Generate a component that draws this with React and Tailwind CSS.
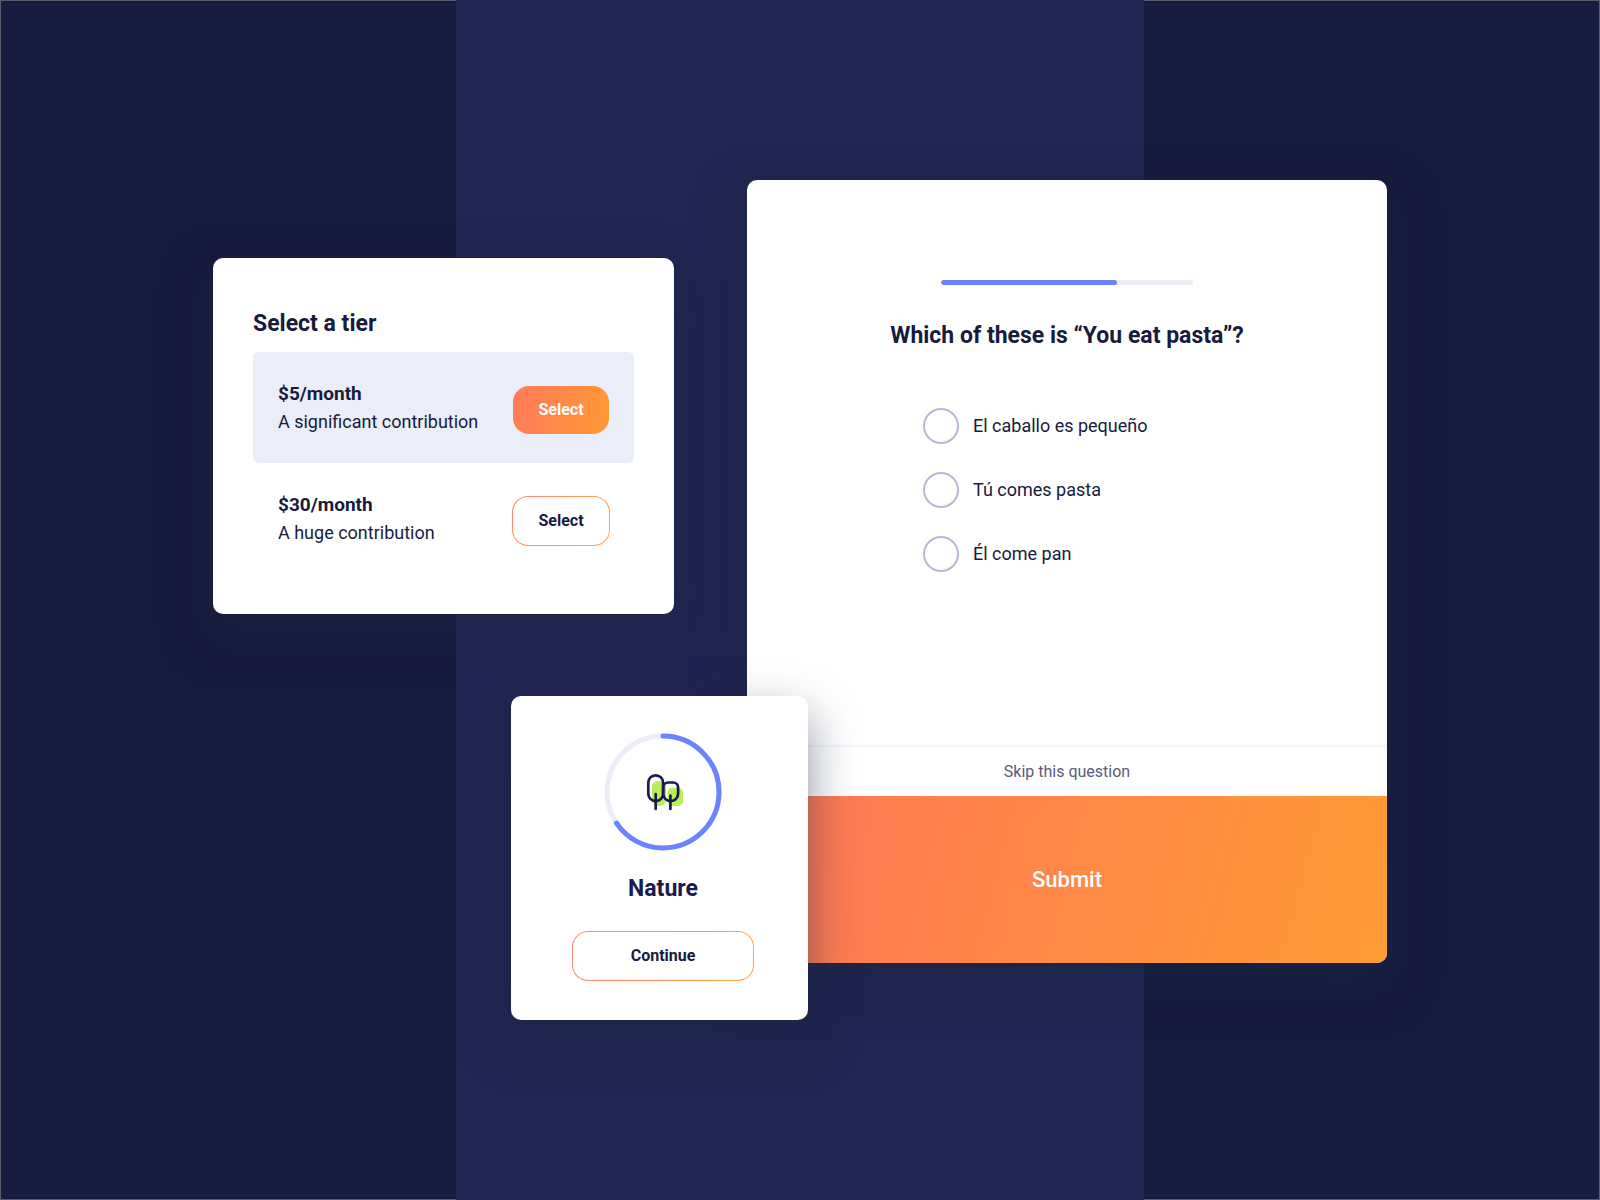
import React, { useState } from 'react';

const tiers = [
  { price: '$5/month', description: 'A significant contribution', featured: true },
  { price: '$30/month', description: 'A huge contribution', featured: false },
];

const answers = ['El caballo es pequeño', 'Tú comes pasta', 'Él come pan'];

const Backdrop = () => (
  <div className="absolute inset-0 grid grid-cols-[57fr_86fr_57fr]">
    <div className="border-y border-l border-[#5b5d6f] bg-[#171b3d]" />
    <div className="bg-[#212551]" />
    <div className="border-y border-r border-[#5b5d6f] bg-[#171b3d]" />
  </div>
);

const OutlineButton = ({ className, children }) => (
  <button
    type="button"
    className={`h-[50px] rounded-2xl border border-transparent text-base font-bold text-[#181b3d] [background:linear-gradient(#fff,#fff)_padding-box,linear-gradient(105deg,#ff8a70,#ffa64d)_border-box] ${className}`}
  >
    {children}
  </button>
);

const TierCard = () => (
  <section className="rounded-[10px] bg-white px-10 pt-[52px] pb-10 shadow-[0_20px_48px_rgba(26,39,68,0.5)]">
    <h2 className="mb-[14px] text-[23px] leading-7 font-bold">Select a tier</h2>
    {tiers.map((tier) => (
      <div
        key={tier.price}
        className={`flex items-center justify-between rounded-md px-[25px] pt-7 pb-[27px] ${tier.featured ? 'bg-[#ebedf8]' : ''}`}
      >
        <div>
          <h3 className="text-[19px] leading-7 font-bold">{tier.price}</h3>
          <p className="text-lg leading-7">{tier.description}</p>
        </div>
        {tier.featured ? (
          <button type="button" className="mt-1 h-12 w-24 rounded-2xl bg-[linear-gradient(105deg,#ff7a5c,#ff9a34)] text-base font-bold text-white">
            Select
          </button>
        ) : (
          <OutlineButton className="mt-1 -mr-px w-[98px]">Select</OutlineButton>
        )}
      </div>
    ))}
  </section>
);

const NatureProgress = () => (
  <svg className="h-[118px] w-[118px]" viewBox="0 0 118 118" fill="none" strokeLinecap="round">
    <circle cx="59" cy="59" r="56" stroke="#ebedf8" strokeWidth="5" />
    <circle cx="59" cy="59" r="56" stroke="#6b83ff" strokeWidth="5" pathLength="1000" strokeDasharray="656 1000" transform="rotate(-90 59 59)" />
    <rect x="48" y="48" width="14" height="25" rx="6" fill="#b8ee57" />
    <rect x="63.7" y="54.7" width="15.3" height="18.3" rx="5" fill="#b8ee57" />
    <g stroke="#1b1a50" strokeWidth="2.7">
      <rect x="44.3" y="42.3" width="14.8" height="25.7" rx="7.2" />
      <path d="M59.2 54.5a5 5 0 0 1 5-5h4.9a5 5 0 0 1 5 5v6.3a7.2 7.2 0 0 1-7.2 7.2h-.5a7.2 7.2 0 0 1-7.2-7.2z" />
      <path d="M51.7 61v15M66.4 62.5V76" />
    </g>
  </svg>
);

const NatureCard = () => (
  <section className="relative z-10 mt-[82px] -mr-[134px] flex w-[297px] flex-col items-center self-end rounded-[10px] bg-white pt-[37px] pr-[54px] pb-[39px] pl-[61px] shadow-[0_20px_48px_rgba(26,39,68,0.5)]">
    <NatureProgress />
    <h2 className="mt-6 mb-7 text-[23px] leading-7 font-bold text-[#1b1a50]">Nature</h2>
    <OutlineButton className="w-full">Continue</OutlineButton>
  </section>
);

const QuizCard = () => {
  const [answer, setAnswer] = useState('');

  return (
    <form className="flex w-[640px] flex-col overflow-hidden rounded-[10px] bg-white pt-[100px] shadow-[0_20px_48px_rgba(26,39,68,0.5)]">
      <div className="mx-auto h-[5px] w-[252px] overflow-hidden rounded-full bg-[#ebedf8]">
        <div className="h-full w-[70%] rounded-full bg-[#6b83ff]" />
      </div>
      <h2 className="mt-[37px] text-center text-[23px] leading-7 font-bold">Which of these is “You eat pasta”?</h2>
      <div role="radiogroup" aria-label="Answers" className="mx-auto mt-[58px] flex w-[288px] flex-col gap-7">
        {answers.map((text) => (
          <label key={text} className="flex items-center gap-[14px] text-lg leading-7">
            <input
              type="radio"
              name="answer"
              value={text}
              checked={answer === text}
              onChange={() => setAnswer(text)}
              className="size-9 appearance-none rounded-full border-2 border-[#b4b9d9] checked:border-[#6b83ff] checked:bg-[#6b83ff]"
            />
            {text}
          </label>
        ))}
      </div>
      <button type="button" className="mt-[173px] h-[51px] border-t-2 border-[#f4f5fb] text-base text-[#5a5b7d]">
        Skip this question
      </button>
      <button type="submit" className="h-[167px] bg-[linear-gradient(105deg,#ff7659,#ff9b34)] text-[22px] font-medium text-white">
        Submit
      </button>
    </form>
  );
};

const App = () => (
  <main className="relative min-h-screen font-[Roboto,sans-serif] text-[#181b3d]">
    <Backdrop />
    <div className="relative flex items-start justify-center gap-[73px] py-[180px]">
      <div className="flex w-[461px] flex-col pt-[78px]">
        <TierCard />
        <NatureCard />
      </div>
      <QuizCard />
    </div>
  </main>
);

export default App;
